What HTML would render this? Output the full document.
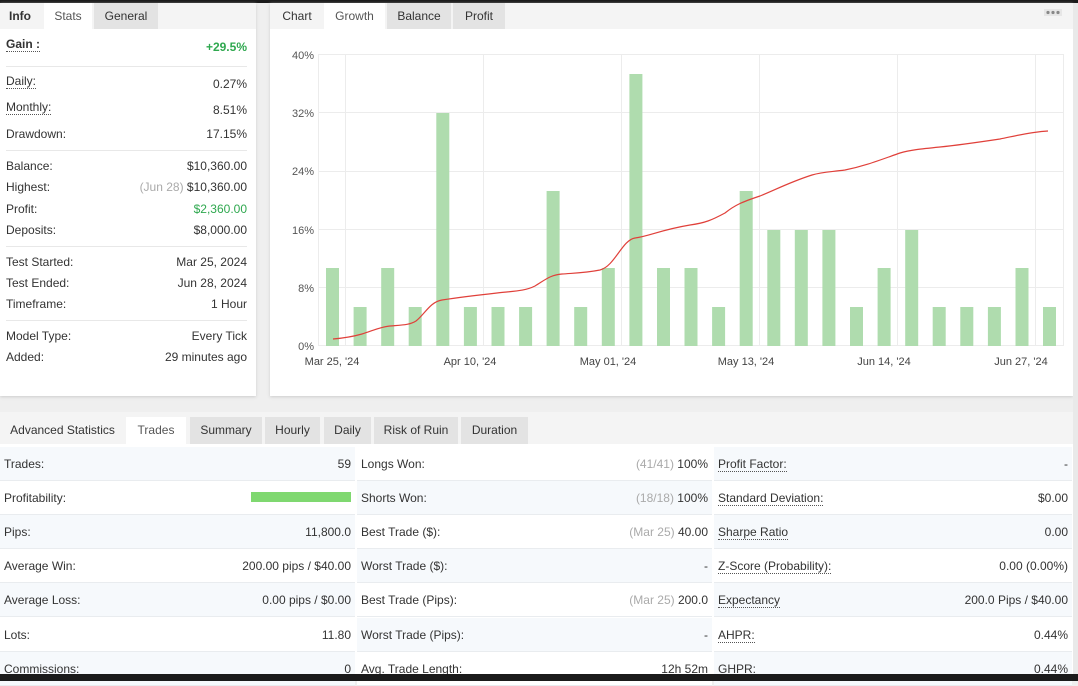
<!DOCTYPE html>
<html><head><meta charset="utf-8"><style>
*{margin:0;padding:0;box-sizing:border-box}
body{width:1078px;height:681px;overflow:hidden;background:#efefef;font-family:"Liberation Sans",sans-serif;font-size:12px;color:#333;position:relative}
.abs{position:absolute}
.tab{position:absolute;top:3px;height:26px;line-height:26px;text-align:center;font-size:12px}
.g{background:#e3e3e3}
.row{position:absolute;left:6px;width:241px;display:flex;justify-content:space-between;height:20px;line-height:20px}
.u{border-bottom:1px dotted #555;line-height:14px;display:inline-block;height:15px}
.hr{position:absolute;left:6px;width:241px;border-top:1px solid #e8e8e8}
.mut{color:#aaa}
.cell{position:absolute;height:34px;line-height:34px;display:flex;justify-content:space-between;border-bottom:1px solid #e9ecef;padding:0 4px}
.b{background:#f6f9fc}
.w{background:#fff}
.btab{position:absolute;top:417px;height:27px;line-height:27px;text-align:center}
</style></head><body>
<div class="abs" style="left:0;top:0;width:1078px;height:3px;background:#1b1b1b"></div>
<!-- left panel -->
<div class="abs" style="left:0;top:3px;width:256px;height:393px;background:#fff;box-shadow:0 1px 3px #ccc"></div>
<div class="abs" style="left:0;top:3px;width:256px;height:26px;background:#f4f4f4"></div>
<div class="tab" style="left:0;width:40px;font-weight:bold;color:#333">Info</div>
<div class="tab" style="left:44px;width:48px;background:#fff;color:#555">Stats</div>
<div class="tab g" style="left:94px;width:64px">General</div>
<div class="row" style="top:37px;font-weight:bold"><span class="u">Gain :</span><span style="color:#2fa84f">+29.5%</span></div>
<div class="hr" style="top:66px"></div>
<div class="row" style="top:74px"><span class="u">Daily:</span><span>0.27%</span></div>
<div class="row" style="top:100px"><span class="u">Monthly:</span><span>8.51%</span></div>
<div class="row" style="top:124px"><span>Drawdown:</span><span>17.15%</span></div>
<div class="hr" style="top:150px"></div>
<div class="row" style="top:156px"><span>Balance:</span><span>$10,360.00</span></div>
<div class="row" style="top:177px"><span>Highest:</span><span><span class="mut">(Jun 28)</span> $10,360.00</span></div>
<div class="row" style="top:199px"><span>Profit:</span><span style="color:#2fa84f">$2,360.00</span></div>
<div class="row" style="top:220px"><span>Deposits:</span><span>$8,000.00</span></div>
<div class="hr" style="top:246px"></div>
<div class="row" style="top:252px"><span>Test Started:</span><span>Mar 25, 2024</span></div>
<div class="row" style="top:273px"><span>Test Ended:</span><span>Jun 28, 2024</span></div>
<div class="row" style="top:294px"><span>Timeframe:</span><span>1 Hour</span></div>
<div class="hr" style="top:320px"></div>
<div class="row" style="top:326px"><span>Model Type:</span><span>Every Tick</span></div>
<div class="row" style="top:347px"><span>Added:</span><span>29 minutes ago</span></div>
<!-- right panel -->
<div class="abs" style="left:270px;top:3px;width:803px;height:393px;background:#fff;box-shadow:0 1px 3px #ccc"></div>
<div class="abs" style="left:270px;top:3px;width:803px;height:26px;background:#f4f4f4"></div>
<div class="tab" style="left:270px;width:54px;color:#333">Chart</div>
<div class="tab" style="left:324px;width:61px;background:#fff;color:#555">Growth</div>
<div class="tab g" style="left:387px;width:64px">Balance</div>
<div class="tab g" style="left:453px;width:52px">Profit</div>
<svg class="abs" style="left:1044px;top:9px" width="18" height="7"><rect width="18" height="7" fill="#e6e6e6"/><circle cx="4" cy="3.5" r="1.6" fill="#888"/><circle cx="9" cy="3.5" r="1.6" fill="#888"/><circle cx="14" cy="3.5" r="1.6" fill="#888"/></svg>
<svg class="abs" style="left:0;top:0" width="1078" height="400">
<g stroke="#ececec" stroke-width="1">
<line x1="318" y1="54.5" x2="1063" y2="54.5"/><line x1="318" y1="112.5" x2="1063" y2="112.5"/><line x1="318" y1="171.5" x2="1063" y2="171.5"/><line x1="318" y1="229.5" x2="1063" y2="229.5"/><line x1="318" y1="287.5" x2="1063" y2="287.5"/><line x1="318" y1="345.5" x2="1063" y2="345.5"/>
<line x1="318.5" y1="54" x2="318.5" y2="346"/><line x1="345.5" y1="54" x2="345.5" y2="346"/><line x1="483.5" y1="54" x2="483.5" y2="346"/><line x1="621.5" y1="54" x2="621.5" y2="346"/><line x1="759.5" y1="54" x2="759.5" y2="346"/><line x1="897.5" y1="54" x2="897.5" y2="346"/><line x1="1035.5" y1="54" x2="1035.5" y2="346"/><line x1="1063.5" y1="54" x2="1063.5" y2="346"/>
</g>
<g fill="#afdcae">
<rect x="326" y="268" width="13" height="78"/><rect x="353.6" y="307" width="13" height="39"/><rect x="381.2" y="268" width="13" height="78"/><rect x="408.7" y="307" width="13" height="39"/><rect x="436.3" y="113" width="13" height="233"/><rect x="463.9" y="307" width="13" height="39"/><rect x="491.5" y="307" width="13" height="39"/><rect x="519.1" y="307" width="13" height="39"/><rect x="546.6" y="191" width="13" height="155"/><rect x="574.2" y="307" width="13" height="39"/><rect x="601.8" y="268" width="13" height="78"/><rect x="629.4" y="74" width="13" height="272"/><rect x="657" y="268" width="13" height="78"/><rect x="684.5" y="268" width="13" height="78"/><rect x="712.1" y="307" width="13" height="39"/><rect x="739.7" y="191" width="13" height="155"/><rect x="767.3" y="230" width="13" height="116"/><rect x="794.8" y="230" width="13" height="116"/><rect x="822.4" y="230" width="13" height="116"/><rect x="850" y="307" width="13" height="39"/><rect x="877.6" y="268" width="13" height="78"/><rect x="905.2" y="230" width="13" height="116"/><rect x="932.7" y="307" width="13" height="39"/><rect x="960.3" y="307" width="13" height="39"/><rect x="987.9" y="307" width="13" height="39"/><rect x="1015.5" y="268" width="13" height="78"/><rect x="1043" y="307" width="13" height="39"/>
</g>
<path d="M333 339 C345 338 355 336 362 334 C372 331 380 327 390 326 C402 325 410 325 416 321 C425 314 430 302 442 300 C455 298 470 296 497 293 C515 291 525 291 535 286 C545 280 550 275 562 274 C575 273 585 273 600 270 C615 266 622 240 635 238 C650 236 660 230 690 225 C705 223 712 220 725 213 C735 205 742 202 760 196 C775 190 790 182 812 175 C822 172 830 172 845 170 C865 166 880 160 900 153 C910 150 920 149 940 147 C960 145 980 142 1000 139 C1015 136 1030 132 1048 131" fill="none" stroke="#e0403a" stroke-width="1.2"/>
<g font-family="Liberation Sans" font-size="11" fill="#555" text-anchor="end">
<text x="314" y="59">40%</text><text x="314" y="117">32%</text><text x="314" y="175">24%</text><text x="314" y="234">16%</text><text x="314" y="292">8%</text><text x="314" y="350">0%</text>
</g>
<g font-family="Liberation Sans" font-size="11" fill="#444" text-anchor="middle">
<text x="332" y="365">Mar 25, '24</text><text x="470" y="365">Apr 10, '24</text><text x="608" y="365">May 01, '24</text><text x="746" y="365">May 13, '24</text><text x="884" y="365">Jun 14, '24</text><text x="1021" y="365">Jun 27, '24</text>
</g>
</svg>
<!-- bottom panel -->
<div class="abs" style="left:0;top:412px;width:1073px;height:269px;background:#fff"></div>
<div class="abs" style="left:0;top:412px;width:1073px;height:32px;background:#f4f4f4"></div>
<div class="btab" style="left:0;width:125px;color:#333">Advanced Statistics</div>
<div class="btab" style="left:126px;width:60px;background:#fff;color:#555">Trades</div>
<div class="btab g" style="left:190px;width:72px">Summary</div>
<div class="btab g" style="left:265px;width:55px">Hourly</div>
<div class="btab g" style="left:324px;width:47px">Daily</div>
<div class="btab g" style="left:374px;width:84px">Risk of Ruin</div>
<div class="btab g" style="left:461px;width:67px">Duration</div>

<div class="cell b" style="left:0;top:447px;width:355px"><span>Trades:</span><span>59</span></div>
<div class="cell w" style="left:0;top:481px;width:355px"><span>Profitability:</span><span style="display:inline-block;width:100px;height:10px;margin-top:11px;background:#7fd870"></span></div>
<div class="cell b" style="left:0;top:515px;width:355px"><span>Pips:</span><span>11,800.0</span></div>
<div class="cell w" style="left:0;top:549px;width:355px"><span>Average Win:</span><span>200.00 pips / $40.00</span></div>
<div class="cell b" style="left:0;top:583px;width:355px"><span>Average Loss:</span><span>0.00 pips / $0.00</span></div>
<div class="cell w" style="left:0;top:618px;width:355px"><span>Lots:</span><span>11.80</span></div>
<div class="cell b" style="left:0;top:652px;width:355px"><span>Commissions:</span><span>0</span></div>

<div class="cell w" style="left:357px;top:447px;width:355px"><span>Longs Won:</span><span><span class="mut">(41/41)</span> 100%</span></div>
<div class="cell b" style="left:357px;top:481px;width:355px"><span>Shorts Won:</span><span><span class="mut">(18/18)</span> 100%</span></div>
<div class="cell w" style="left:357px;top:515px;width:355px"><span>Best Trade ($):</span><span><span class="mut">(Mar 25)</span> 40.00</span></div>
<div class="cell b" style="left:357px;top:549px;width:355px"><span>Worst Trade ($):</span><span>-</span></div>
<div class="cell w" style="left:357px;top:583px;width:355px"><span>Best Trade (Pips):</span><span><span class="mut">(Mar 25)</span> 200.0</span></div>
<div class="cell b" style="left:357px;top:618px;width:355px"><span>Worst Trade (Pips):</span><span>-</span></div>
<div class="cell w" style="left:357px;top:652px;width:355px"><span>Avg. Trade Length:</span><span>12h 52m</span></div>

<div class="cell b" style="left:714px;top:447px;width:358px"><span><span class="u">Profit Factor:</span></span><span>-</span></div>
<div class="cell w" style="left:714px;top:481px;width:358px"><span><span class="u">Standard Deviation:</span></span><span>$0.00</span></div>
<div class="cell b" style="left:714px;top:515px;width:358px"><span><span class="u">Sharpe Ratio</span></span><span>0.00</span></div>
<div class="cell w" style="left:714px;top:549px;width:358px"><span><span class="u">Z-Score (Probability):</span></span><span>0.00 (0.00%)</span></div>
<div class="cell b" style="left:714px;top:583px;width:358px"><span><span class="u">Expectancy</span></span><span>200.0 Pips / $40.00</span></div>
<div class="cell w" style="left:714px;top:618px;width:358px"><span><span class="u">AHPR:</span></span><span>0.44%</span></div>
<div class="cell b" style="left:714px;top:652px;width:358px"><span><span class="u">GHPR:</span></span><span>0.44%</span></div>

<div class="abs" style="left:1073px;top:3px;width:5px;height:678px;background:#e9e9e9"></div>
<div class="abs" style="left:0;top:674px;width:1078px;height:7px;background:#1b1b1b"></div>
</body></html>
